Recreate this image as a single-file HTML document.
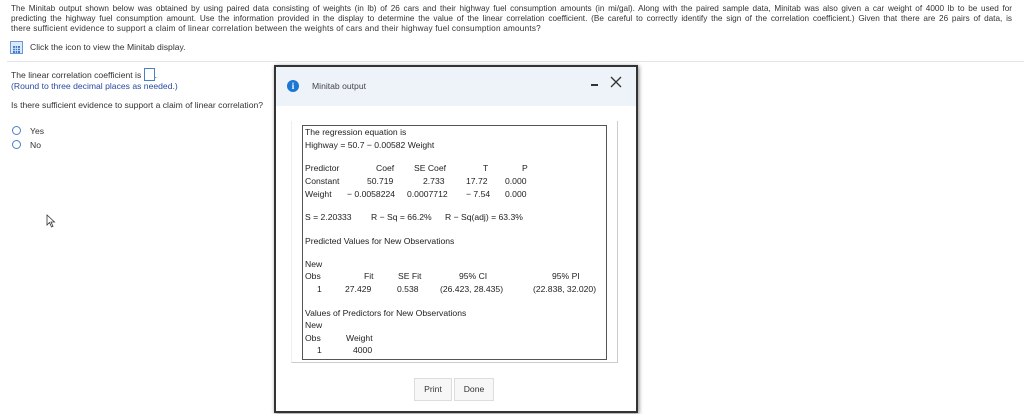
<!DOCTYPE html><html><head><style>
body{margin:0;width:1024px;height:414px;background:#fff;font-family:"Liberation Sans",sans-serif;color:#333;position:relative;overflow:hidden}
.a{position:absolute;white-space:nowrap}
.t{font-size:8.2px;line-height:9.6px}
.j{width:1001px;text-align:justify;text-align-last:justify}
.s{font-size:8.6px}
.m{font-size:8.6px;color:#222}
</style></head><body>
<div class="a t j" style="left:11px;top:4px">The Minitab output shown below was obtained by using paired data consisting of weights (in lb) of 26 cars and their highway fuel consumption amounts (in mi/gal). Along with the paired sample data, Minitab was also given a car weight of 4000 lb to be used for</div>
<div class="a t j" style="left:11px;top:14px">predicting the highway fuel consumption amount. Use the information provided in the display to determine the value of the linear correlation coefficient. (Be careful to correctly identify the sign of the correlation coefficient.) Given that there are 26 pairs of data, is</div>
<div class="a t" style="left:11px;top:24px;letter-spacing:0.22px">there sufficient evidence to support a claim of linear correlation between the weights of cars and their highway fuel consumption amounts?</div>
<div class="a" style="left:10px;top:41px;width:11px;height:11px;border:1px solid #6a9ad6;background:#dde9f8"><svg width="11" height="11"><rect x="2" y="2" width="7" height="7" fill="#3a78c9"/><path d="M2 4.3H9M2 6.6H9M4.3 2V9M6.6 2V9" stroke="#dde9f8" stroke-width=".8"/></svg></div>
<div class="a s" style="left:30px;top:42px">Click the icon to view the Minitab display.</div>
<div class="a" style="left:7px;top:61px;width:1017px;height:1px;background:#e4e4e4"></div>
<div class="a s" style="left:11px;top:68px">The linear correlation coefficient is <span style="display:inline-block;width:9px;height:11px;border:1px solid #4a7fc9;vertical-align:-3px"></span>.</div>
<div class="a s" style="left:11px;top:81px;color:#2a4aa0">(Round to three decimal places as needed.)</div>
<div class="a s" style="left:11px;top:100px">Is there sufficient evidence to support a claim of linear correlation?</div>
<div class="a" style="left:12px;top:126px;width:7px;height:7px;border:1px solid #4a7fc9;border-radius:50%"></div>
<div class="a s" style="left:30px;top:126px">Yes</div>
<div class="a" style="left:12px;top:140px;width:7px;height:7px;border:1px solid #4a7fc9;border-radius:50%"></div>
<div class="a s" style="left:30px;top:140px">No</div>
<svg class="a" style="left:46px;top:214px" width="10" height="14"><path d="M1 1V11L3.5 8.5L5.5 13L7 12.3L5 8H8.5Z" fill="#fff" stroke="#333" stroke-width=".8"/></svg>
<div class="a" style="left:274px;top:65px;width:360px;height:344px;border:2px solid #333;background:#fff;box-shadow:1px 1px 4px #888"></div>
<div class="a" style="left:276px;top:67px;width:360px;height:39px;background:#eef3fa"></div>
<div class="a" style="left:287px;top:80px;width:12px;height:12px;border-radius:50%;background:#1a78d4;color:#fff;font:bold 9px 'Liberation Serif',serif;text-align:center;line-height:12px">i</div>
<div class="a s" style="left:312px;top:81px;color:#444">Minitab output</div>
<div class="a" style="left:591px;top:84px;width:7px;height:2px;background:#333"></div>
<svg class="a" style="left:610px;top:76px" width="12" height="12"><path d="M1 1L11 11M11 1L1 11" stroke="#333" stroke-width="1.3"/></svg>
<div class="a" style="left:291px;top:121px;width:325px;height:241px;border-right:1px solid #ccc;border-bottom:1px solid #ccc;border-left:1px solid #eee"></div>
<div class="a" style="left:302px;top:125px;width:303px;height:233px;border:1px solid #555"></div>
<div class="a m" style="left:305px;top:127px">The regression equation is</div>
<div class="a m" style="left:305px;top:140px">Highway = 50.7 − 0.00582 Weight</div>
<div class="a m" style="left:305px;top:163px">Predictor</div><div class="a m" style="left:376px;top:163px">Coef</div><div class="a m" style="left:414px;top:163px">SE Coef</div><div class="a m" style="left:483px;top:163px">T</div><div class="a m" style="left:522px;top:163px">P</div>
<div class="a m" style="left:305px;top:176px">Constant</div><div class="a m" style="left:367px;top:176px">50.719</div><div class="a m" style="left:423px;top:176px">2.733</div><div class="a m" style="left:466px;top:176px">17.72</div><div class="a m" style="left:505px;top:176px">0.000</div>
<div class="a m" style="left:305px;top:189px">Weight</div><div class="a m" style="left:347px;top:189px">− 0.0058224</div><div class="a m" style="left:407px;top:189px">0.0007712</div><div class="a m" style="left:466px;top:189px">− 7.54</div><div class="a m" style="left:505px;top:189px">0.000</div>
<div class="a m" style="left:305px;top:212px">S = 2.20333</div><div class="a m" style="left:371px;top:212px">R − Sq = 66.2%</div><div class="a m" style="left:445px;top:212px">R − Sq(adj) = 63.3%</div>
<div class="a m" style="left:305px;top:236px">Predicted Values for New Observations</div>
<div class="a m" style="left:305px;top:259px">New</div>
<div class="a m" style="left:305px;top:271px">Obs</div><div class="a m" style="left:364px;top:271px">Fit</div><div class="a m" style="left:398px;top:271px">SE Fit</div><div class="a m" style="left:459px;top:271px">95% CI</div><div class="a m" style="left:552px;top:271px">95% PI</div>
<div class="a m" style="left:317px;top:284px">1</div><div class="a m" style="left:345px;top:284px">27.429</div><div class="a m" style="left:397px;top:284px">0.538</div><div class="a m" style="left:440px;top:284px">(26.423, 28.435)</div><div class="a m" style="left:533px;top:284px">(22.838, 32.020)</div>
<div class="a m" style="left:305px;top:308px">Values of Predictors for New Observations</div>
<div class="a m" style="left:305px;top:320px">New</div>
<div class="a m" style="left:305px;top:333px">Obs</div><div class="a m" style="left:346px;top:333px">Weight</div>
<div class="a m" style="left:317px;top:345px">1</div><div class="a m" style="left:353px;top:345px">4000</div>
<div class="a s" style="left:414px;top:378px;width:36px;height:21px;border:1px solid #ddd;background:#f7f7f7;text-align:center;line-height:21px">Print</div>
<div class="a s" style="left:454px;top:378px;width:38px;height:21px;border:1px solid #ddd;background:#f7f7f7;text-align:center;line-height:21px">Done</div>
</body></html>
